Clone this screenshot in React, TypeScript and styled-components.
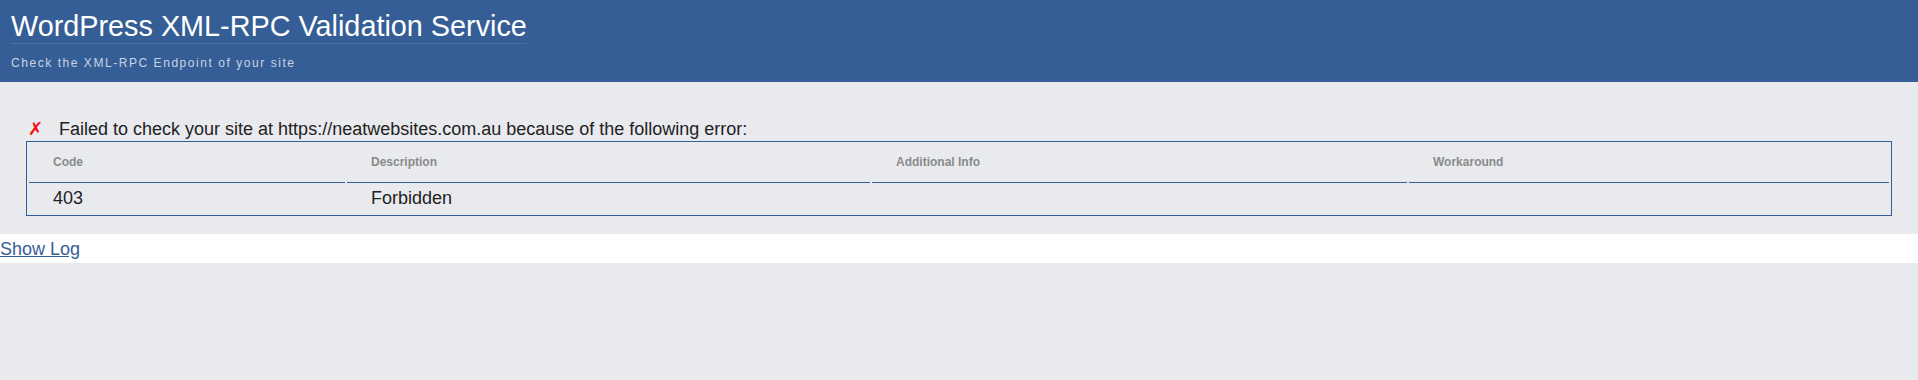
import * as React from 'react';
import styled, { createGlobalStyle } from 'styled-components';

const GlobalStyle = createGlobalStyle`
  html, body {
    margin: 0;
    padding: 0;
    background: #e9eaee;
  }
  body {
    font-family: "Liberation Sans", Arial, sans-serif;
    min-height: 380px;
  }
`;

const Header = styled.header`
  box-sizing: border-box;
  height: 82px;
  padding: 10px 11px 0 11px;
  background: #365e96;
`;

const Title = styled.h1`
  display: inline-block;
  margin: 0;
  font-size: 28.8px;
  font-weight: normal;
  line-height: normal;
  color: #ffffff;
  border-bottom: 1px solid #4c6fa3;
`;

const Subtitle = styled.div`
  margin-top: 12px;
  font-size: 12px;
  letter-spacing: 1.55px;
  color: #c9d3e4;
`;

const Main = styled.main`
  padding: 37px 26px 18px 26px;
`;

const Message = styled.div`
  font-size: 18px;
  color: #222222;
`;

const Mark = styled.span`
  display: inline-block;
  box-sizing: border-box;
  width: 33px;
  padding-left: 2px;
  color: #f21010;
  font-family: "DejaVu Sans", sans-serif;
  font-size: 18px;
  font-weight: bold;
  line-height: 1;
`;

const ErrorTable = styled.table`
  width: 100%;
  margin-top: 1px;
  table-layout: fixed;
  border: 1px solid #365e96;
  border-spacing: 2px;
`;

const HeadCell = styled.th<{ width: number }>`
  box-sizing: border-box;
  width: ${p => p.width}px;
  padding: 11px 24px 13px 24px;
  text-align: left;
  font-size: 12px;
  font-weight: bold;
  color: #8a8a8a;
  border-bottom: 1px solid #365e96;
`;

const Cell = styled.td`
  padding: 3px 24px 4px 24px;
  font-size: 18px;
  color: #222222;
`;

const LogBar = styled.div`
  padding: 5px 0 3px 0;
  background: #ffffff;
`;

const LogLink = styled.a`
  font-size: 18px;
  color: #365e96;
  text-decoration: underline;
  cursor: pointer;
`;

const columns = [
  { label: 'Code', width: 316 },
  { label: 'Description', width: 523 },
  { label: 'Additional Info', width: 535 },
  { label: 'Workaround', width: 480 },
];

const errorRow = ['403', 'Forbidden', '', ''];

const App = () => {
  return (
    <>
      <GlobalStyle />
      <Header>
        <Title>WordPress XML-RPC Validation Service</Title>
        <Subtitle>Check the XML-RPC Endpoint of your site</Subtitle>
      </Header>

      <Main>
        <Message>
          <Mark>✗</Mark>
          Failed to check your site at https://neatwebsites.com.au because of the following error:
        </Message>
        <ErrorTable>
          <thead>
            <tr>
              {columns.map(col => (
                <HeadCell key={col.label} width={col.width}>
                  {col.label}
                </HeadCell>
              ))}
            </tr>
          </thead>
          <tbody>
            <tr>
              {errorRow.map((value, i) => (
                <Cell key={i}>{value}</Cell>
              ))}
            </tr>
          </tbody>
        </ErrorTable>
      </Main>

      <LogBar>
        <LogLink>Show Log</LogLink>
      </LogBar>
    </>
  );
};

export default App;
